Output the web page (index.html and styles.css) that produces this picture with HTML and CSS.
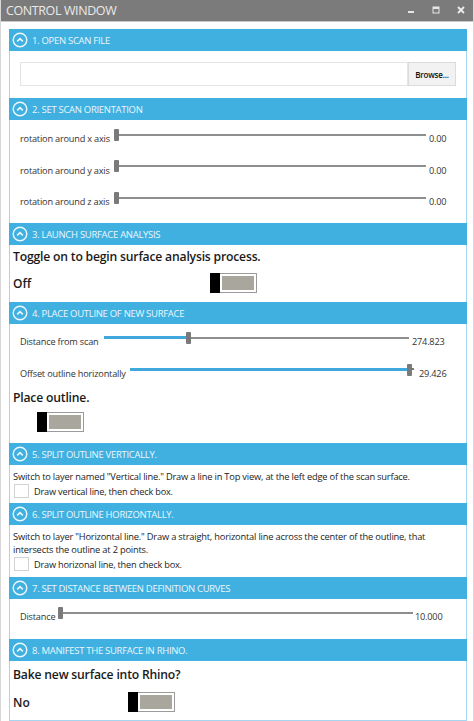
FILE: index.html
```html
<!DOCTYPE html>
<html>
<head>
<meta charset="utf-8">
<link rel="stylesheet" href="styles.css">
</head>
<body>
<div class="window">
  <div class="titlebar">
    <span class="title">CONTROL WINDOW</span>
    <div class="winbtns">
      <svg class="wb" width="8" height="8" viewBox="0 0 8 8"><rect x="1" y="5" width="6" height="2" fill="#e6e6e6"/></svg>
      <svg class="wb" width="8" height="8" viewBox="0 0 8 8"><rect x="1" y="1" width="6" height="6" fill="none" stroke="#e6e6e6" stroke-width="1"/><rect x="1" y="1" width="6" height="2" fill="#e6e6e6"/></svg>
      <svg class="wb" width="8" height="8" viewBox="0 0 8 8"><path d="M1 1L7 7M7 1L1 7" stroke="#eeeeee" stroke-width="1.8"/></svg>
    </div>
  </div>
  <div class="body">
    <div class="panel">

      <div class="hdr"><svg class="chev" width="16" height="16" viewBox="0 0 16 16"><circle cx="8" cy="8" r="6.8" fill="none" stroke="#eef7fc" stroke-width="1.4"/><path d="M5.2 9.3L8 6.6L10.8 9.3" fill="none" stroke="#eef7fc" stroke-width="1.6"/></svg><span>1. OPEN SCAN FILE</span></div>
      <div class="sec s1">
        <div class="filerow"><div class="input"></div><div class="btn">Browse...</div></div>
      </div>

      <div class="hdr"><svg class="chev" width="16" height="16" viewBox="0 0 16 16"><circle cx="8" cy="8" r="6.8" fill="none" stroke="#eef7fc" stroke-width="1.4"/><path d="M5.2 9.3L8 6.6L10.8 9.3" fill="none" stroke="#eef7fc" stroke-width="1.6"/></svg><span>2. SET SCAN ORIENTATION</span></div>
      <div class="sec s2">
        <div class="slider rot"><span class="lbl">rotation around x axis</span><div class="track"><div class="thumb" style="left:0%"></div></div><span class="val">0.00</span></div>
        <div class="slider rot"><span class="lbl">rotation around y axis</span><div class="track"><div class="thumb" style="left:0%"></div></div><span class="val">0.00</span></div>
        <div class="slider rot"><span class="lbl">rotation around z axis</span><div class="track"><div class="thumb" style="left:0%"></div></div><span class="val">0.00</span></div>
      </div>

      <div class="hdr"><svg class="chev" width="16" height="16" viewBox="0 0 16 16"><circle cx="8" cy="8" r="6.8" fill="none" stroke="#eef7fc" stroke-width="1.4"/><path d="M5.2 9.3L8 6.6L10.8 9.3" fill="none" stroke="#eef7fc" stroke-width="1.6"/></svg><span>3. LAUNCH SURFACE ANALYSIS</span></div>
      <div class="sec s3">
        <div class="bold">Toggle on to begin surface analysis process.</div>
        <div class="togrow"><span class="tlbl off">Off</span><div class="toggle"><div class="knob"></div><div class="fill"></div></div></div>
      </div>

      <div class="hdr"><svg class="chev" width="16" height="16" viewBox="0 0 16 16"><circle cx="8" cy="8" r="6.8" fill="none" stroke="#eef7fc" stroke-width="1.4"/><path d="M5.2 9.3L8 6.6L10.8 9.3" fill="none" stroke="#eef7fc" stroke-width="1.6"/></svg><span>4. PLACE OUTLINE OF NEW SURFACE</span></div>
      <div class="sec s4">
        <div class="slider dist"><span class="lbl">Distance from scan</span><div class="track"><div class="filled" style="width:27.5%"></div><div class="thumb" style="left:27.5%"></div></div><span class="val">274.823</span></div>
        <div class="slider offs"><span class="lbl">Offset outline horizontally</span><div class="track"><div class="filled" style="width:100%"></div><div class="thumb" style="left:100%"></div><div class="dot"></div></div><span class="val">29.426</span></div>
        <div class="bold place">Place outline.</div>
        <div class="togrow indent"><div class="toggle"><div class="knob"></div><div class="fill"></div></div></div>
      </div>

      <div class="hdr"><svg class="chev" width="16" height="16" viewBox="0 0 16 16"><circle cx="8" cy="8" r="6.8" fill="none" stroke="#eef7fc" stroke-width="1.4"/><path d="M5.2 9.3L8 6.6L10.8 9.3" fill="none" stroke="#eef7fc" stroke-width="1.6"/></svg><span>5. SPLIT OUTLINE VERTICALLY.</span></div>
      <div class="sec s5">
        <div class="txt">Switch to layer named "Vertical line." Draw a line in Top view, at the left edge of the scan surface.</div>
        <div class="chk"><div class="box"></div><span>Draw vertical line, then check box.</span></div>
      </div>

      <div class="hdr"><svg class="chev" width="16" height="16" viewBox="0 0 16 16"><circle cx="8" cy="8" r="6.8" fill="none" stroke="#eef7fc" stroke-width="1.4"/><path d="M5.2 9.3L8 6.6L10.8 9.3" fill="none" stroke="#eef7fc" stroke-width="1.6"/></svg><span>6. SPLIT OUTLINE HORIZONTALLY.</span></div>
      <div class="sec s6">
        <div class="txt">Switch to layer "Horizontal line." Draw a straight, horizontal line across the center of the outline, that intersects the outline at 2 points.</div>
        <div class="chk"><div class="box"></div><span>Draw horizonal line, then check box.</span></div>
      </div>

      <div class="hdr"><svg class="chev" width="16" height="16" viewBox="0 0 16 16"><circle cx="8" cy="8" r="6.8" fill="none" stroke="#eef7fc" stroke-width="1.4"/><path d="M5.2 9.3L8 6.6L10.8 9.3" fill="none" stroke="#eef7fc" stroke-width="1.6"/></svg><span>7. SET DISTANCE BETWEEN DEFINITION CURVES</span></div>
      <div class="sec s7">
        <div class="slider defd"><span class="lbl">Distance</span><div class="track"><div class="thumb" style="left:0%"></div></div><span class="val">10.000</span></div>
      </div>

      <div class="hdr"><svg class="chev" width="16" height="16" viewBox="0 0 16 16"><circle cx="8" cy="8" r="6.8" fill="none" stroke="#eef7fc" stroke-width="1.4"/><path d="M5.2 9.3L8 6.6L10.8 9.3" fill="none" stroke="#eef7fc" stroke-width="1.6"/></svg><span>8. MANIFEST THE SURFACE IN RHINO.</span></div>
      <div class="sec s8">
        <div class="bold">Bake new surface into Rhino?</div>
        <div class="togrow"><span class="tlbl no">No</span><div class="toggle"><div class="knob"></div><div class="fill"></div></div></div>
      </div>

    </div>
  </div>
</div>
</body>
</html>
```

FILE: styles.css
```css
* { box-sizing: border-box; }
html, body { margin: 0; padding: 0; background: #ffffff; }
body { font-family: "Open Sans", "Noto Sans", sans-serif; color: #222; }

.window {
  width: 474px;
  height: 721px;
  display: flex;
  flex-direction: column;
  border-left: 1px solid #d8d8d8;
  border-right: 1px solid #d8d8d8;
}
.titlebar {
  height: 22px;
  flex: none;
  background: #7b7b7b;
  display: flex;
  align-items: center;
  justify-content: space-between;
  padding-left: 5px;
  border-bottom: 1px solid #c8c8c8;
}
.title {
  color: #eaeaea;
  font-size: 12.5px;
  letter-spacing: -0.4px;
  font-weight: 400;
}
.winbtns {
  display: flex;
  align-items: center;
  gap: 17px;
  padding-right: 8px;
  margin-top: -2px;
}
.wb { display: block; }

.body {
  flex: 1;
  padding: 7px 6px 0 8px;
}
.panel {
  display: flex;
  flex-direction: column;
  border-bottom: 1px solid #a6d6ef;
}
.hdr {
  height: 22px;
  background: #40b0e1;
  display: flex;
  align-items: center;
  padding-left: 3px;
  color: #eaf6fc;
  font-size: 9.5px;
  letter-spacing: -0.3px;
  white-space: nowrap;
}
.chev { display: block; margin-right: 4px; flex: none; }

.sec {
  border-left: 1px solid #a6d6ef;
  border-right: 1px solid #a6d6ef;
  background: #fff;
  display: flex;
  flex-direction: column;
}

/* section 1 */
.s1 { height: 47px; padding: 11px 10px 0 10px; }
.filerow { display: flex; height: 24px; }
.input { flex: 1; border: 1px solid #e4e4e4; background: #fff; }
.btn {
  width: 48px;
  border: 1px solid #dcdcdc;
  background: #f2f2f2;
  font-size: 8px;
  font-weight: 600;
  color: #111;
  display: flex;
  align-items: center;
  justify-content: center;
  letter-spacing: -0.2px;
}

/* sliders */
.slider {
  display: flex;
  align-items: center;
  height: 13px;
  font-size: 9.2px;
  color: #333;
  letter-spacing: -0.2px;
}
.slider .lbl { padding-top: 8px; white-space: nowrap; }
.slider .val { padding-top: 8px; white-space: nowrap; color: #333; }
.track {
  position: relative;
  flex: 1;
  height: 2px;
  background: #8e8e8e;
}
.filled {
  position: absolute;
  left: 0; top: -0.5px;
  height: 3px;
  background: #3fa9dd;
}
.thumb {
  position: absolute;
  top: -5px;
  width: 5px;
  height: 12px;
  margin-left: -2px;
  background: #7a7a7a;
  border-radius: 1px;
}
.dot {
  position: absolute;
  right: -5px;
  top: -1px;
  width: 2px;
  height: 2px;
  background: #777;
}

.s2 { height: 103px; padding: 8px 0 0 10px; gap: 18.5px; }
.rot .lbl { width: 96px; }
.rot .track { margin-right: 2px; }
.rot .val { width: 38px; padding-left: 1px; }

.s4 { height: 119px; padding: 7px 0 0 10px; }
.dist .lbl { margin-right: 5px; }
.dist .val { width: 57px; padding-left: 3px; }
.offs { margin-top: 19px; }
.offs .lbl { margin-right: 4px; }
.offs .val { width: 57px; padding-left: 10px; }
.place { margin-top: 14px; margin-left: -10px; }

.s7 { height: 40px; padding: 7px 0 0 10px; }
.defd .lbl { margin-right: 5px; }
.defd .val { width: 53px; padding-left: 2px; }

/* bold / toggles */
.bold {
  font-size: 12.2px;
  font-weight: 600;
  color: #1a1a1a;
  line-height: 16px;
  padding-left: 3px;
  letter-spacing: -0.2px;
  white-space: nowrap;
}
.s3 { height: 57px; padding-top: 4px; }
.s8 { height: 59px; padding-top: 6px; }
.togrow { display: flex; align-items: center; margin-top: 8px; padding-left: 3px; }
.s8 .togrow { margin-top: 9px; }
.tlbl { font-size: 12px; font-weight: 600; color: #1a1a1a; }
.off { width: 197px; }
.no { width: 115px; }
.indent { padding-left: 17px; margin-top: 6px; }

.toggle {
  display: flex;
  width: 47px;
  height: 20px;
  border: 1px solid #9b9b9b;
  background: #fff;
}
.knob {
  width: 10px;
  background: #000;
  margin: -1px 0 -1px -1px;
}
.fill {
  flex: 1;
  margin: 2px;
  background: #a8a69d;
}

/* text + checkbox */
.txt {
  font-size: 9.3px;
  line-height: 13px;
  color: #222;
  padding: 0 8px 0 3px;
  letter-spacing: -0.2px;
}
.s5 { height: 38px; padding-top: 5px; }
.s6 { height: 52px; padding-top: 5px; }
.chk { display: flex; align-items: center; margin-top: 1px; padding-left: 4px; font-size: 9.2px; color: #222; letter-spacing: -0.2px; }
.chk .box {
  width: 15px;
  height: 14px;
  border: 1px solid #d2d2d2;
  background: #fff;
  margin-right: 5px;
}
```
